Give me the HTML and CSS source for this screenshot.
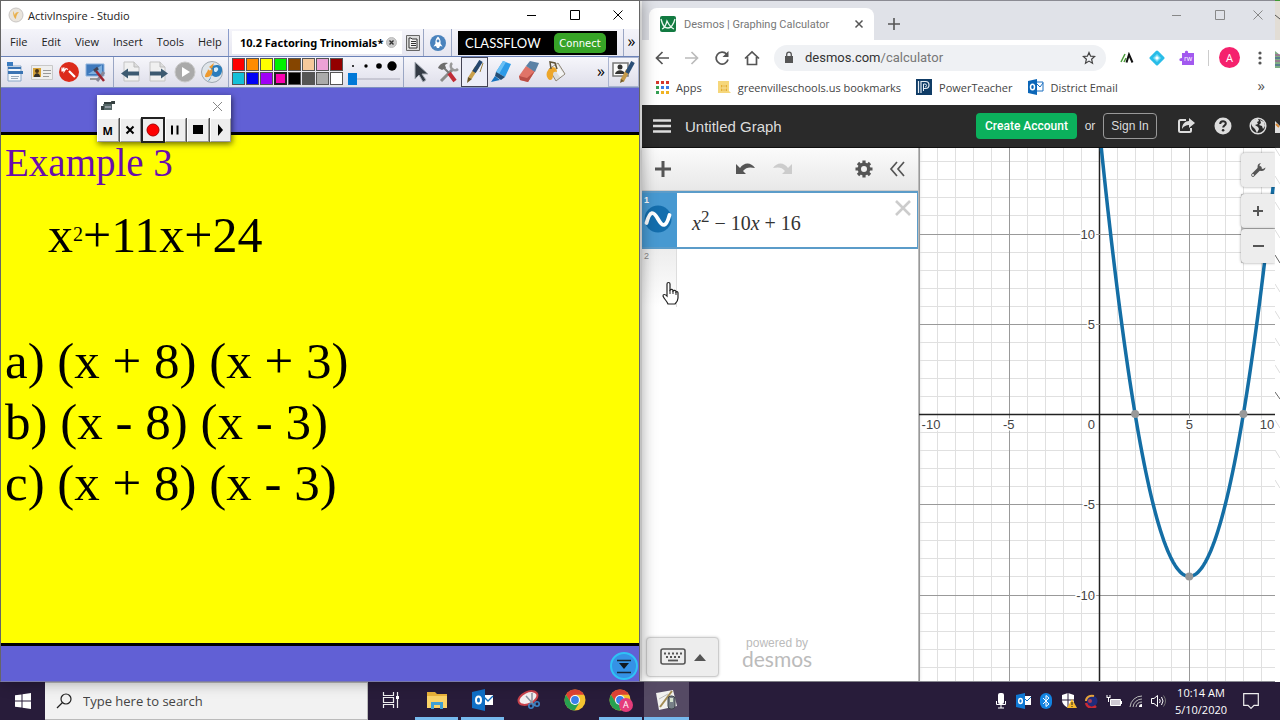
FILE: index.html
```html
<!DOCTYPE html>
<html lang="en">
<head>
    <meta charset="UTF-8">
    <meta name="viewport" content="width=device-width, initial-scale=1.0">
    <title>Factoring Trinomials</title>
    <link rel="stylesheet" href="styles.css">
</head>
<body>
    <main class="desktop">
        <!-- ActivInspire window -->
        <section class="inspire">
            <header class="title-bar">
                <svg class="app-logo" width="16" height="16" viewBox="0 0 16 16"><circle cx="8" cy="8" r="7" fill="#e9e4dc" stroke="#c9c6c4"/><path d="M5 4c0 4 1 7 3 8 0-3 1-5 3-7-3 0-4 1-4 3-1-1-1-3-2-4z" fill="#e9b04c"/></svg>
                <h1>ActivInspire - Studio</h1>
                <div class="window-controls">
                    <button aria-label="Minimize"><svg width="12" height="12" viewBox="0 0 12 12"><path d="M1 6.500h9" stroke="#000"/></svg></button>
                    <button aria-label="Maximize"><svg width="12" height="12" viewBox="0 0 12 12"><path d="M1.500 1.500h9v9h-9z" fill="none" stroke="#000"/></svg></button>
                    <button aria-label="Close"><svg width="12" height="12" viewBox="0 0 12 12"><path d="M1.500 1.500l9 9M10.500 1.500l-9 9" stroke="#000"/></svg></button>
                </div>
            </header>

            <div class="menu-row">
                <nav class="menu">
                    <button>File</button>
                    <button>Edit</button>
                    <button>View</button>
                    <button>Insert</button>
                    <button>Tools</button>
                    <button>Help</button>
                </nav>
                <div class="doc-tab">
                    <span>10.2 Factoring Trinomials*</span>
                    <button aria-label="Close tab"><svg width="11" height="11" viewBox="0 0 11 11"><circle cx="5.500" cy="5.500" r="5" fill="#ccc" stroke="#bbb"/><path d="M3.500 3.500l4 4M7.500 3.500l-4 4" stroke="#333" stroke-width="1.400"/></svg></button>
                </div>
                <button class="menu-icon" aria-label="Browsers"><svg width="14" height="16" viewBox="0 0 14 16"><path d="M.5.5h13v15H.5z" fill="#ddd" stroke="#666"/><path d="M3 3h2l1 1h5v9H3z" fill="#f4f4f4" stroke="#333"/><path d="M5 6.500h5M5 8.500h5M5 10.500h5" stroke="#333"/></svg></button>
                <button class="menu-icon lined" aria-label="Dashboard"><svg width="18" height="18" viewBox="0 0 18 18"><circle cx="9" cy="9" r="8" fill="#4a83bd"/><path d="M9 2.500c2 2 3 4 2.500 7l2 3-2.500-.5L10 14H8l-1-2-2.500.5 2-3C6 6.500 7 4.500 9 2.500z" fill="#fff"/><circle cx="9" cy="7" r="1.400" fill="#4a83bd"/></svg></button>
                <div class="classflow">
                    <span>CLASSFLOW</span>
                    <button>Connect</button>
                </div>
                <button class="more" aria-label="More">»</button>
            </div>

            <div class="tool-row">
                <div class="tools">
                    <button aria-label="Page browser"><svg width="20" height="22" viewBox="0 0 20 22"><path d="M3 5h13v15H3z" fill="#f3f7fb" stroke="#8aa7c8"/><path d="M2 1h6v4H2z" fill="#3b7cc0"/><path d="M3 6h13v2H3zM3 10h15v3H3z" fill="#3b74b3"/><path d="M6 15.500h8M6 17.500h7" stroke="#9ab"/></svg></button>
                    <button aria-label="Profiles"><svg width="22" height="20" viewBox="0 0 22 20"><path d="M.5 3.500h21v14H.5z" fill="#eee" stroke="#c8c8c8"/><path d="M2 6h8v9H2z" fill="#d7a43a"/><circle cx="6" cy="9" r="2" fill="#4a3418"/><path d="M3 15c0-5 6-5 6 0z" fill="#33302c"/><path d="M12 8.500h8M12 11.500h8M12 14.500h6" stroke="#999"/></svg></button>
                    <button aria-label="Annotate"><svg width="22" height="22" viewBox="0 0 22 22"><circle cx="11" cy="11" r="10" fill="#dc2b1b"/><path d="M11 10l6 6" stroke="#fff" stroke-width="2.200"/><path d="M4 6.500v4l2-4v4l2-3 2 1" stroke="#fff" stroke-width="1.200" fill="none"/></svg></button>
                    <button aria-label="Desktop tools"><svg width="22" height="22" viewBox="0 0 22 22"><path d="M1 3h18v12H1z" fill="#3f79bc" stroke="#8fb3dc"/><path d="M3 13L17 4v9z" fill="#7fb0df"/><path d="M5 18h9" stroke="#999" stroke-width="2"/><path d="M12 20l7-9" stroke="#889" stroke-width="3"/><path d="M11 10l8 10" stroke="#9d2631" stroke-width="2.500"/><path d="M9 10l4-3" stroke="#445" stroke-width="3"/></svg></button>
                </div>
                <div class="tools lined">
                    <button aria-label="Previous page"><svg width="22" height="22" viewBox="0 0 22 22"><path d="M4 1h10l5 5v14H4z" fill="#f0f0f0" stroke="#c4c4c4"/><path d="M14 1v5h5" fill="#ddd" stroke="#bbb"/><path d="M1 12.500l7-5v3h11v4H8v3z" fill="#3d5a70"/></svg></button>
                    <button aria-label="Next page"><svg width="22" height="22" viewBox="0 0 22 22"><path d="M3 1h10l5 5v14H3z" fill="#f0f0f0" stroke="#c4c4c4"/><path d="M13 1v5h5" fill="#ddd" stroke="#bbb"/><path d="M21 12.500l-7-5v3H3v4h11v3z" fill="#3d5a70"/></svg></button>
                    <button aria-label="Start vote"><svg width="22" height="22" viewBox="0 0 22 22"><circle cx="11" cy="11" r="10" fill="#aaa" stroke="#c8c8c8"/><path d="M8 6l8 5-8 5z" fill="#fff"/></svg></button>
                    <button aria-label="Express poll"><svg width="24" height="24" viewBox="0 0 24 24"><circle cx="12" cy="12" r="10.500" fill="#dfe5ea" stroke="#9fa8b0"/><path d="M8 21c4-5 5-9 2-14 7-4 13-2 12 4s-6 7-9 5-1 4-5 5z" fill="#2a7dbc"/><path d="M5 17c5 1 9-3 7-9-1 3-3 3-4 1 0 3-3 4-3 8zM9 7l5-4-2 6z" fill="#ee9a2f"/><path d="M14 8c3-2 5 0 4 2s-3 3-4 1z" fill="#d8eefa"/></svg></button>
                </div>
                <div class="palette">
                    <button class="swatch red" aria-label="Red"></button>
                    <button class="swatch orange" aria-label="Orange"></button>
                    <button class="swatch yellow" aria-label="Yellow"></button>
                    <button class="swatch green" aria-label="Green"></button>
                    <button class="swatch brown" aria-label="Brown"></button>
                    <button class="swatch peach" aria-label="Peach"></button>
                    <button class="swatch pink" aria-label="Pink"></button>
                    <button class="swatch maroon" aria-label="Maroon"></button>
                    <button class="swatch cyan" aria-label="Cyan"></button>
                    <button class="swatch blue" aria-label="Blue"></button>
                    <button class="swatch violet" aria-label="Violet"></button>
                    <button class="swatch magenta" aria-label="Magenta"></button>
                    <button class="swatch black" aria-label="Black"></button>
                    <button class="swatch gray" aria-label="Gray"></button>
                    <button class="swatch silver" aria-label="Silver"></button>
                    <button class="swatch white" aria-label="White"></button>
                </div>
                <div class="pen-width">
                    <svg width="52" height="12" viewBox="0 0 52 12"><circle cx="5" cy="6" r="1"/><circle cx="18" cy="6" r="1.700"/><circle cx="31" cy="6" r="2.800"/><circle cx="44" cy="6" r="4.700"/></svg>
                    <input type="range" min="0" max="100" value="0" aria-label="Pen width">
                </div>
                <div class="tools lined">
                    <button aria-label="Select"><svg width="20" height="24" viewBox="0 0 20 24"><path d="M4 2v17l4-4 4 7 3-2-4-6h6z" fill="#343b45" stroke="#a9afb8"/></svg></button>
                    <button aria-label="Main tools"><svg width="24" height="24" viewBox="0 0 24 24"><path d="M5 21L17 9" stroke="#8a8a8a" stroke-width="3"/><path d="M16 3a4 4 0 1 0 6 6" stroke="#999" stroke-width="2.500" fill="none"/><path d="M13 13l6 8" stroke="#c02b36" stroke-width="4"/><path d="M6 6l7 7" stroke="#777" stroke-width="2"/><path d="M2 8c2-5 6-6 10-5L9 5l1 3-4 2z" fill="#6d6d6d"/></svg></button>
                    <button class="selected" aria-label="Pen"><svg width="20" height="24" viewBox="0 0 20 24"><path d="M5 18L12 7" stroke="#caa14c" stroke-width="4"/><path d="M9 12L16 1" stroke="#24466d" stroke-width="4"/><path d="M2 23l1-6 4 2z" fill="#6a5524"/><path d="M18 3l-3 9" stroke="#9c8240"/></svg></button>
                    <button aria-label="Highlighter"><svg width="24" height="24" viewBox="0 0 24 24"><path d="M6 12L13 1l8 3-6 13z" fill="#2d9be8"/><path d="M13 1l3 1-7 12-3-2z" fill="#6bc0f5"/><path d="M6 12l9 5-4 3-6-4z" fill="#234d75"/><path d="M5 16l5 4-9 2z" fill="#1672bd"/></svg></button>
                    <button aria-label="Eraser"><svg width="24" height="24" viewBox="0 0 24 24"><path d="M2 16L9 6l9 5-7 11-8-2z" fill="#e07468"/><path d="M9 6l4-5 9 2-4 9z" fill="#5a81a5"/><path d="M2 16l8 2 8-7-7 11-8-2z" fill="#b94e46"/></svg></button>
                    <button aria-label="Fill"><svg width="24" height="24" viewBox="0 0 24 24"><path d="M5 9l9-6 7 11-9 7z" fill="#ddd" stroke="#8f8778"/><path d="M13 4l7 10-4 3L9 7z" fill="#f4f4f4"/><path d="M5 9c4-3 8-2 8 3-3-1-4 0-4 3s-1 5-3 5-6-6-1-11z" fill="#eda62a"/><path d="M7 9L6 2l5 1 2 6" stroke="#5e5238" fill="none" stroke-width="1.500"/></svg></button>
                </div>
                <button class="more" aria-label="More tools">»</button>
                <button class="profile" aria-label="Annotate over desktop"><svg width="24" height="24" viewBox="0 0 24 24"><path d="M1 3h15v13H1z" fill="#fafafa" stroke="#777" stroke-width="1.500"/><circle cx="8" cy="7" r="2.500" fill="#333"/><path d="M3 14c1-5 9-5 10 0z" fill="#333"/><path d="M10 21l6-11" stroke="#c59a4a" stroke-width="4"/><path d="M15 13l6-11" stroke="#2b4f78" stroke-width="4"/><path d="M8 23l1-4 3 2z" fill="#735c2a"/></svg></button>
            </div>

            <div class="flipchart">
                <div class="slide">
                    <h2>Example 3</h2>
                    <p class="expression">x<span>2</span>+11x+24</p>
                    <ol>
                        <li>a) (x + 8) (x + 3)</li>
                        <li>b) (x - 8) (x - 3)</li>
                        <li>c) (x + 8) (x - 3)</li>
                    </ol>
                </div>
                <button class="page-down" aria-label="Drop toolbar"><svg width="30" height="30" viewBox="0 0 30 30"><circle cx="15" cy="15" r="13" fill="#3592e6" stroke="#2fc2f5" stroke-width="2"/><path d="M8 9.500h14M8 21.500h14" stroke="#17283a" stroke-width="1.500"/><path d="M10 12h10l-5 6z" fill="#101820"/></svg></button>
            </div>

            <!-- Screen recorder -->
            <aside class="recorder">
                <div class="recorder-title">
                    <svg width="16" height="11" viewBox="0 0 16 11"><path d="M3 3h9v6H4z" fill="#566"/><path d="M4 1h8v2H4zM11 0h4v3h-3zM1 5h3v4H1z" fill="#354040"/><path d="M5 6h6" stroke="#ccd"/></svg>
                    <button aria-label="Close recorder"><svg width="11" height="11" viewBox="0 0 11 11"><path d="M1 1l9 9M10 1l-9 9" stroke="#888"/></svg></button>
                </div>
                <div class="recorder-buttons">
                    <button>M</button>
                    <button aria-label="Cancel"><svg width="12" height="12" viewBox="0 0 12 12"><path d="M2.500 2.500l7 7M9.500 2.500l-7 7" stroke="#000" stroke-width="2"/></svg></button>
                    <button class="active" aria-label="Record"><svg width="14" height="14" viewBox="0 0 14 14"><circle cx="7" cy="7" r="6" fill="#fe0000" stroke="#a00"/></svg></button>
                    <button aria-label="Pause"><svg width="12" height="12" viewBox="0 0 12 12"><path d="M3 1.500v9M8.500 1.500v9" stroke="#000" stroke-width="2"/></svg></button>
                    <button aria-label="Stop"><svg width="12" height="12" viewBox="0 0 12 12"><path d="M1 1h10v9H1z"/></svg></button>
                    <button aria-label="Play"><svg width="12" height="12" viewBox="0 0 12 12"><path d="M4 0l5 6-5 6z"/></svg></button>
                </div>
            </aside>
        </section>

        <!-- Chrome window -->
        <section class="chrome">
            <div class="tab-strip">
                <div class="tab">
                    <svg width="16" height="16" viewBox="0 0 16 16"><rect width="16" height="16" rx="2" fill="#127a41"/><path d="M1 3c2 8 4 9 7 9s5-2 7-9M2 13c3-1 4-4 5-8 2 4 4 7 7 8" stroke="#eaf7ee" stroke-width="1.300" fill="none"/></svg>
                    <span>Desmos | Graphing Calculator</span>
                    <button aria-label="Close tab"><svg width="10" height="10" viewBox="0 0 10 10"><path d="M1.500 1.500l7 7M8.500 1.500l-7 7" stroke="#555" stroke-width="1.500"/></svg></button>
                </div>
                <button class="new-tab" aria-label="New tab"><svg width="12" height="12" viewBox="0 0 12 12"><path d="M6 0v12M0 6h12" stroke="#555" stroke-width="1.600"/></svg></button>
                <div class="window-controls">
                    <button aria-label="Minimize"><svg width="12" height="12" viewBox="0 0 12 12"><path d="M1 6.500h9" stroke="#888"/></svg></button>
                    <button aria-label="Maximize"><svg width="12" height="12" viewBox="0 0 12 12"><path d="M1.500 1.500h9v9h-9z" fill="none" stroke="#888"/></svg></button>
                    <button aria-label="Close"><svg width="12" height="12" viewBox="0 0 12 12"><path d="M1.500 1.500l9 9M10.500 1.500l-9 9" stroke="#888"/></svg></button>
                </div>
            </div>

            <div class="address-row">
                <button aria-label="Back"><svg width="16" height="16" viewBox="0 0 16 16"><path d="M8.500 2L2.500 8l6 6M2.500 8H15" fill="none" stroke="#555" stroke-width="1.700"/></svg></button>
                <button aria-label="Forward"><svg width="16" height="16" viewBox="0 0 16 16"><path d="M7.500 2l6 6-6 6M13.500 8H1" fill="none" stroke="#bbb" stroke-width="1.700"/></svg></button>
                <button aria-label="Reload"><svg width="16" height="16" viewBox="0 0 16 16"><path d="M12.700 4.200A6 6 0 1 0 14 9.500" fill="none" stroke="#555" stroke-width="1.700"/><path d="M14.500 1v6h-6z" fill="#555"/></svg></button>
                <button aria-label="Home"><svg width="16" height="16" viewBox="0 0 16 16"><path d="M1 8.500L8 2l7 6.500M3.500 7v7.500h9V7" fill="none" stroke="#555" stroke-width="1.700"/></svg></button>
                <div class="address">
                    <svg width="10" height="14" viewBox="0 0 10 14"><path d="M1 5h8v7H1z" fill="#555"/><path d="M2.700 5V3.500a2.300 2.300 0 0 1 4.600 0V5" fill="none" stroke="#555" stroke-width="1.300"/></svg>
                    <span class="url">desmos.com<i>/calculator</i></span>
                    <button aria-label="Bookmark"><svg width="14" height="14" viewBox="0 0 14 14"><path d="M7 1.500l1.600 3.700 4 .3-3 2.700.9 4L7 10.100l-3.500 2.100.9-4-3-2.700 4-.3z" fill="none" stroke="#444" stroke-width="1.200"/></svg></button>
                </div>
                <button aria-label="Accessibility extension"><svg width="14" height="12" viewBox="0 0 14 12"><path d="M1 10L5 2M4 10l2-4" stroke="#4b9c3a" stroke-width="1.500"/><path d="M6.500 10.500L9 2.500l3.500 8" stroke="#111" stroke-width="2" fill="none"/></svg></button>
                <button aria-label="Blue extension"><svg width="16" height="16" viewBox="0 0 16 16"><path d="M8 2l6 6-6 6-6-6z" fill="#29bde8" stroke="#29bde8" stroke-linejoin="round" stroke-width="3"/><path d="M8 4l4 4-4 4-4-4z" fill="#7cdcf5"/><path d="M8 6l2 2-2 2-2-2z" fill="#fff"/></svg></button>
                <button aria-label="Read and write extension"><svg width="16" height="16" viewBox="0 0 16 16"><path d="M3 3h3c-1-3 4-3 3 0h6v12H3v-4c-3 1-4-3 0-3z" fill="#a259ef"/><text x="5" y="11" class="rw">rw</text></svg></button>
                <span class="divider"></span>
                <button class="avatar">A</button>
                <button aria-label="Menu"><svg width="4" height="14" viewBox="0 0 4 14"><g fill="#555"><circle cx="2" cy="2" r="1.600"/><circle cx="2" cy="7" r="1.600"/><circle cx="2" cy="12" r="1.600"/></g></svg></button>
            </div>

            <nav class="bookmarks">
                <a href="#"><svg width="14" height="14" viewBox="0 0 14 14"><path d="M1 1h3v3H1zM6 1h3v3H6zM11 1h3v3h-3z" fill="#d5372c"/><path d="M1 6h3v3H1zM1 11h3v3H1z" fill="#35a053"/><path d="M6 6h3v3H6zM11 6h3v3h-3z" fill="#3c7de6"/><path d="M6 11h3v3H6zM11 11h3v3h-3z" fill="#f0b323"/></svg>Apps</a>
                <a href="#"><svg width="14" height="14" viewBox="0 0 14 14"><path d="M1 1h11v10l2 2H1z" fill="#f6d77b"/><path d="M4 5h6v6H4z" fill="#e4ae35"/><path d="M6 5v6M8 5v6M4 8h6" stroke="#f9e29b"/></svg>greenvilleschools.us bookmarks</a>
                <a href="#"><svg width="16" height="16" viewBox="0 0 16 16"><path d="M0 0h16v16H0z" fill="#103c66"/><path d="M2.500 2v12M5 14V2.500h4.500a3.500 3.500 0 0 1 0 7H7.500" stroke="#e8eef5" stroke-width="1.200" fill="none"/><path d="M7.500 12V5H9a1.500 1.500 0 0 1 0 3" stroke="#e8eef5" fill="none"/></svg>PowerTeacher</a>
                <a href="#"><svg width="16" height="16" viewBox="0 0 16 16"><path d="M8 3h7v9H8z" fill="#fff" stroke="#1b6fc0"/><path d="M9 5l3 3 3-4" stroke="#1b6fc0" fill="none"/><path d="M0 2l9-2v16l-9-2z" fill="#0b66b8"/><ellipse cx="4.500" cy="8" rx="2" ry="2.800" fill="none" stroke="#fff" stroke-width="1.500"/></svg>District Email</a>
                <button aria-label="More bookmarks">»</button>
            </nav>

            <header class="desmos-header">
                <button aria-label="Open menu"><svg width="18" height="16" viewBox="0 0 18 16"><path d="M0 2.500h18M0 8h18M0 13.500h18" stroke="#ddd" stroke-width="2.600"/></svg></button>
                <h2>Untitled Graph</h2>
                <button class="create">Create Account</button>
                <span>or</span>
                <button class="sign-in">Sign In</button>
                <button class="round" aria-label="Share"><svg width="18" height="18" viewBox="0 0 18 18"><path d="M9 3H3.500Q2 3 2 4.500v9Q2 15 3.500 15h9q1.500 0 1.500-1.500V11" fill="none" stroke="#ddd" stroke-width="2"/><path d="M12 1l6 5-6 5V8c-3 0-5 1-7 4 0-5 3-8 7-8z" fill="#ddd"/></svg></button>
                <button class="round" aria-label="Help"><svg width="18" height="18" viewBox="0 0 18 18"><circle cx="9" cy="9" r="8.500" fill="#ddd"/><path d="M6.200 7c0-4 5.600-3.500 5.600-.5 0 2-2.600 2-2.600 4" fill="none" stroke="#2a2a2a" stroke-width="2"/><circle cx="9.100" cy="13.300" r="1.300" fill="#2a2a2a"/></svg></button>
                <button class="round" aria-label="Language"><svg width="18" height="18" viewBox="0 0 18 18"><circle cx="9" cy="9" r="7.800" fill="none" stroke="#ddd" stroke-width="1.500"/><path d="M2 6c2-4 5-4 7-4l1 2-2 1 1 2-3 1 3 2 1 2-2 4-2-4-3-3zM11 3l4 2 1 4-2 3-1-3-3-1 2-2z" fill="#ddd"/></svg></button>
            </header>

            <div class="calculator">
                <div class="panel">
                    <div class="panel-bar">
                        <button aria-label="Add item"><svg width="16" height="16" viewBox="0 0 16 16"><path d="M8 0v16M0 8h16" stroke="#555" stroke-width="3"/></svg></button>
                        <button class="undo" aria-label="Undo"><svg width="20" height="14" viewBox="0 0 20 14"><path d="M0 2v10h10L7 9c3-4 7-4 12-3C15 0 8 0 4 6z" fill="#555"/></svg></button>
                        <button aria-label="Redo"><svg width="20" height="14" viewBox="0 0 20 14"><path d="M20 2v10H10l3-3C10 5 6 5 1 6 5 0 12 0 16 6z" fill="#ccc"/></svg></button>
                        <button class="gear" aria-label="Edit list"><svg width="18" height="18" viewBox="0 0 18 18"><circle cx="9" cy="9" r="4.700" fill="none" stroke="#555" stroke-width="3.400"/><path d="M9 .5v3M9 14.500v3M.5 9h3M14.500 9h3M3 3l2.500 2.500M12.500 12.500L15 15M15 3l-2.500 2.500M5.500 12.500L3 15" stroke="#555" stroke-width="3.200"/></svg></button>
                        <button aria-label="Hide list"><svg width="16" height="16" viewBox="0 0 16 16"><path d="M8 1L2 8l6 7M15 1L9 8l6 7" fill="none" stroke="#555" stroke-width="1.700"/></svg></button>
                    </div>
                    <div class="row active">
                        <div class="row-index">
                            <span>1</span>
                            <svg width="28" height="28" viewBox="0 0 28 28"><circle cx="14" cy="14" r="13.500" fill="#146ead"/><path d="M2.500 18C6 5 9.500 6 14 14s8 9 11.500-4" fill="none" stroke="#fff" stroke-width="3.800" stroke-linecap="round"/></svg>
                        </div>
                        <div class="math"><i>x</i><sup>2</sup><b>−</b>10<i>x</i><b>+</b>16</div>
                        <button aria-label="Delete"><svg width="16" height="16" viewBox="0 0 16 16"><path d="M1 1l14 14M15 1L1 15" stroke="#ccc" stroke-width="2.600"/></svg></button>
                    </div>
                    <div class="row">
                        <div class="row-index"><span>2</span></div>
                        <svg class="pointer" width="18" height="24" viewBox="0 0 18 24"><path d="M6 14V3c0-2 3-2 3 0v6c1-1 3-1 3 1 1-1 3-1 3 1 1-1 2 0 2 1v5c0 3-2 5-3 6H7c-1-3-4-5-5-8 0-2 2-2 4 0z" fill="#fff" stroke="#222" stroke-width="1.200"/><path d="M9 9v4M12 10v3M15 11v3" stroke="#222"/></svg>
                    </div>
                    <div class="panel-footer">
                        <button class="keypad" aria-label="Show keypad">
                            <svg width="26" height="18" viewBox="0 0 26 18"><rect x="1" y="1" width="24" height="15" rx="2" fill="none" stroke="#555" stroke-width="1.600"/><path d="M4 5.500h18M6 9h15" stroke="#555" stroke-width="2" stroke-dasharray="2 2"/><path d="M8 12.500h10" stroke="#555" stroke-width="1.800"/></svg>
                            <svg width="12" height="7" viewBox="0 0 12 7"><path d="M6 0l6 7H0z" fill="#555"/></svg>
                        </button>
                        <p class="powered">powered by<strong>desmos</strong></p>
                    </div>
                </div>
                <div class="graph">
                    <svg id="plot"></svg>
                    <div class="graph-tools">
                        <button aria-label="Graph settings"><svg width="16" height="16" viewBox="0 0 16 16"><path d="M3 13l7-7" stroke="#555" stroke-width="3.600" stroke-linecap="round"/><path d="M11 1a4 4 0 1 0 4.500 4.500L13 7l-3-1-.5-3z" fill="#555"/><circle cx="3" cy="13" r="1" fill="#eee"/></svg></button>
                        <div class="zoom">
                            <button aria-label="Zoom in"><svg width="12" height="12" viewBox="0 0 12 12"><path d="M6 1v10M1 6h10" stroke="#555" stroke-width="2"/></svg></button>
                            <button aria-label="Zoom out"><svg width="12" height="12" viewBox="0 0 12 12"><path d="M1 6h11" stroke="#555" stroke-width="2"/></svg></button>
                        </div>
                    </div>
                </div>
            </div>
        </section>

        <!-- Strip of the desktop wallpaper -->
        <svg class="wallpaper" width="5" height="682" viewBox="0 0 5 682" preserveAspectRatio="none">
            <path d="M0 0h5v40H0z" fill="#e2ddd5"/>
            <path d="M0 0h5v1H0z" fill="#3f9b35"/>
            <path d="M0 15l5 4" stroke="#555"/>
            <path d="M0 51l5 4v13H0z" fill="#7fae84"/>
            <path d="M0 55h5M0 61h5" stroke="#b04a9b"/><path d="M0 58h5M0 65h5" stroke="#364f9b"/>
            <path d="M0 105h5v43H0z" fill="#2a2a2a"/>
            <path d="M0 121l5 5v7H0z" fill="#ddd"/><path d="M1 124l3 3" stroke="#d98a36" stroke-width="2"/>
            <path d="M0 255l5 8M0 392l5 7" stroke="#666"/>
            <path d="M0 148l5 8M0 176l5 8M0 202l5 8M0 230l5 8M0 284l5 8M0 311l5 8M0 338l5 8M0 365l5 8M0 420l5 8M0 450l5 8M0 480l5 8" stroke="#ddd"/>
        </svg>
    </main>

    <footer class="taskbar">
        <button class="start" aria-label="Start"><svg width="16" height="16" viewBox="0 0 16 16"><path d="M0 2.300L6.500 1.400v6.100H0zM7.500 1.200L16 0v7.500H7.500zM0 8.500h6.500v6.100L0 13.700zM7.500 8.500H16V16l-8.500-1.200z" fill="#fff"/></svg></button>
        <label class="search">
            <svg width="16" height="16" viewBox="0 0 16 16"><circle cx="10" cy="6" r="5" fill="none" stroke="#222" stroke-width="1.200"/><path d="M6.500 9.500L1 15" stroke="#222" stroke-width="1.200"/></svg>
            <input type="text" placeholder="Type here to search" aria-label="Type here to search">
        </label>
        <nav class="apps">
            <button aria-label="Task view"><svg width="18" height="16" viewBox="0 0 18 16"><path d="M1.500 0v3.500h10V0M1.500 16v-3.500h10V16M1.500 5.500h10v5h-10zM15.500 0v16" fill="none" stroke="#eee" stroke-width="1.200"/><path d="M14 4h3v3h-3z" fill="#fff"/></svg></button>
            <button class="open" aria-label="File Explorer"><svg width="22" height="20" viewBox="0 0 22 20"><path d="M1 2h8l2 2h10v14H1z" fill="#e9b23a"/><path d="M1 6h20v12H1z" fill="#fbd368"/><path d="M5 19v-7h12v7h-3v-4H8v4z" fill="#3f9fd4"/></svg></button>
            <button class="open" aria-label="Outlook"><svg width="22" height="22" viewBox="0 0 22 22"><path d="M11 6h10v10H11z" fill="#fff"/><path d="M12 8l4 4 5-5" stroke="#0f6cbd" stroke-width="1.300" fill="none"/><path d="M0 3l13-3v22L0 19z" fill="#0f6fc6"/><ellipse cx="6.500" cy="11" rx="2.500" ry="3.500" fill="none" stroke="#fff" stroke-width="2"/></svg></button>
            <button aria-label="Snipping Tool"><svg width="24" height="22" viewBox="0 0 24 22"><ellipse cx="11" cy="9" rx="10" ry="6" fill="#f3eff0" stroke="#c8414a" stroke-width="2" transform="rotate(-25 11 9)"/><path d="M9 7l9 10M15 4v11" stroke="#8a94a0" stroke-width="1.500"/><circle cx="14" cy="17" r="2.200" fill="none" stroke="#3b82c4" stroke-width="1.600"/><circle cx="20" cy="15" r="2.200" fill="none" stroke="#3b82c4" stroke-width="1.600"/></svg></button>
            <button aria-label="Chrome"><svg width="22" height="22" viewBox="0 0 22 22"><circle cx="11" cy="11" r="10.500" fill="#f4c430"/><path d="M1.900 5.800A10.500 10.500 0 0 1 20.100 5.800H11L6.500 13.600z" fill="#e04434"/><path d="M1.900 5.800A10.500 10.500 0 0 0 10.500 21.500l5-8-9-.5z" fill="#28a150"/><circle cx="11" cy="11" r="5" fill="#fff"/><circle cx="11" cy="11" r="3.900" fill="#3b80ea"/></svg></button>
            <button class="open" aria-label="Chrome, profile A"><svg width="24" height="24" viewBox="0 0 24 24"><circle cx="11" cy="12" r="10.500" fill="#f4c430"/><path d="M1.900 6.800A10.500 10.500 0 0 1 20.100 6.800H11L6.500 14.600z" fill="#e04434"/><path d="M1.900 6.800A10.500 10.500 0 0 0 10.500 22.500l5-8-9-.5z" fill="#28a150"/><circle cx="11" cy="12" r="5" fill="#fff"/><circle cx="11" cy="12" r="3.900" fill="#3b80ea"/><circle cx="17" cy="17" r="7" fill="#e53c7b"/><text x="14" y="20" class="badge">A</text></svg></button>
            <button class="open current" aria-label="ActivInspire"><svg width="24" height="22" viewBox="0 0 24 22"><path d="M1 4l17-3 4 16-18 4z" fill="#f2f2ef"/><path d="M5 18L17 2" stroke="#a38c54" stroke-width="2"/><path d="M4 10l9-5" stroke="#bbb"/><rect x="13" y="7" width="7" height="13" rx="3" fill="#778087" stroke="#3f454b"/><path d="M15 9h3v4h-3z" fill="#d6e3cf"/></svg></button>
        </nav>
        <div class="tray">
            <button aria-label="Microphone"><svg width="12" height="16" viewBox="0 0 12 16"><rect x="3" width="6" height="11" rx="2" fill="#fff"/><path d="M1.500 8v3.500h9V8M6 11v4M3 15h6" stroke="#fff" fill="none"/></svg></button>
            <button aria-label="Outlook"><svg width="16" height="16" viewBox="0 0 16 16"><path d="M7 3h8v9H7z" fill="#fff"/><path d="M9 6l2 2 4-4" stroke="#0f6cbd" fill="none"/><path d="M0 2l9-2v16l-9-2z" fill="#0f78d4"/><ellipse cx="4.500" cy="8" rx="1.800" ry="2.500" fill="none" stroke="#fff" stroke-width="1.400"/></svg></button>
            <button aria-label="Bluetooth"><svg width="12" height="16" viewBox="0 0 12 16"><rect width="12" height="16" rx="6" fill="#1283e2"/><path d="M3 5l6 6-3 2.500v-11L9 5l-6 6" fill="none" stroke="#fff"/></svg></button>
            <button aria-label="Security"><svg width="16" height="16" viewBox="0 0 16 16"><path d="M7 0l6 2v5c0 4-3 6-6 8-3-2-6-4-6-8V2z" fill="#fff"/><path d="M7 0v15M1 7h12" stroke="#281c3a"/><path d="M11 6l5 9H6z" fill="#f5b72c"/><path d="M11 9v3M11 13v1" stroke="#222"/></svg></button>
            <button aria-label="Sync"><svg width="14" height="14" viewBox="0 0 14 14"><circle cx="8" cy="7" r="5.500" fill="#202c7c"/><path d="M2 9a6 6 0 0 0 10 3" stroke="#c92936" stroke-width="2.500" fill="none"/><path d="M2 7c0-4 4-6 8-5" stroke="#e6a23a" stroke-width="2" fill="none"/><circle cx="6" cy="7" r="2" fill="#a83b56"/></svg></button>
            <button aria-label="Battery"><svg width="16" height="14" viewBox="0 0 16 14"><path d="M4.500 5.500h10v6h-10z" fill="#cfcad4" stroke="#fff"/><path d="M15.500 7v3M1 1v2M4 1v2M.5 3.500h4M2.500 4v4" stroke="#fff"/></svg></button>
            <button aria-label="Network"><svg width="14" height="14" viewBox="0 0 14 14"><path d="M1 13A12 12 0 0 1 13 2M4 13a9 9 0 0 1 9-8M7 13a6 6 0 0 1 6-5" fill="none" stroke="#bbb"/><path d="M10 13a3 3 0 0 1 3-3v3z" fill="#fff"/></svg></button>
            <button aria-label="Volume"><svg width="16" height="14" viewBox="0 0 16 14"><path d="M.5 4.500H3l3.500-3v11L3 9.500H.5z" fill="none" stroke="#fff"/><path d="M8.500 5q1.500 2 0 4M10.500 3q3 4 0 8" stroke="#fff" fill="none"/><path d="M12.500 1.500q4 5.500 0 11" stroke="#777" fill="none"/></svg></button>
        </div>
        <time class="clock">10:14 AM<br>5/10/2020</time>
        <button class="notifications" aria-label="Notifications"><svg width="16" height="16" viewBox="0 0 16 16"><path d="M.7.700h14.600v11.600H11L8 15.300l-3-3H.7z" fill="none" stroke="#eee" stroke-width="1.200"/></svg></button>
    </footer>

    <script src="graph.js"></script>
</body>
</html>
```
FILE: styles.css
```css
* {
    box-sizing: border-box;
}

body {
    margin: 0;
    height: 100vh;
    display: flex;
    flex-direction: column;
    overflow: hidden;
    font-family: "Open Sans", "Noto Sans", sans-serif;
    font-size: 11px;
    color: #222;
}

button {
    display: flex;
    align-items: center;
    justify-content: center;
    padding: 0;
    border: none;
    background: none;
    font: inherit;
    color: inherit;
}

h1, h2, p, ol {
    margin: 0;
    padding: 0;
    font-weight: normal;
}

svg {
    flex: none;
}

.desktop {
    flex: 1;
    min-height: 0;
    display: grid;
    grid-template-columns: 50% 1fr 5px;
    background: #fff;
}

.wallpaper {
    height: 100%;
}

/* ActivInspire */
.inspire {
    position: relative;
    z-index: 1;
    display: flex;
    flex-direction: column;
    min-width: 0;
    border: 1px solid #666;
    border-bottom-color: #7a79a8;
    background: #fff;
    box-shadow: 2px 0 14px rgba(0, 0, 0, 0.35);
}

.title-bar {
    display: flex;
    align-items: center;
    height: 28px;
    padding-left: 7px;
    gap: 4px;
}

.title-bar h1 {
    font-size: 11px;
}

.window-controls {
    display: flex;
    margin-left: auto;
}

.window-controls button {
    width: 43px;
    height: 28px;
}

.menu-row {
    display: flex;
    align-items: stretch;
    height: 28px;
    background: linear-gradient(#f4f4fa, #e6e6f0);
    border-bottom: 1px solid #6b82b8;
}

.menu {
    display: flex;
    gap: 14px;
    width: 228px;
    padding: 0 0 3px 9px;
    border-right: 1px solid #8a9ccb;
}

.doc-tab {
    display: flex;
    align-items: center;
    justify-content: space-between;
    width: 170px;
    margin: 2px 1px 2px 3px;
    padding: 0 5px 0 8px;
    background: #fff;
    color: #000;
    font: bold 11px "Noto Sans", sans-serif;
    white-space: nowrap;
}

.menu-icon {
    width: 20px;
}

.lined {
    border-left: 1px solid #9aa6c4;
}

.menu-icon.lined {
    border-right: 1px solid #9aa6c4;
    width: 29px;
}

.classflow {
    display: flex;
    align-items: center;
    justify-content: space-between;
    width: 159px;
    margin: 2px 6px 1px;
    padding: 0 11px 0 7px;
    background: #000;
    color: #fff;
    font: 13px Lato, sans-serif;
}

.classflow button {
    width: 52px;
    height: 20px;
    border-radius: 5px;
    background: #37a427;
    font: 10px "DejaVu Sans", sans-serif;
}

.more {
    flex: 1;
    font-size: 16px;
    color: #000;
    padding-bottom: 3px;
}

.menu-row .more {
    border-left: 1px solid #9aa6c4;
}

.tool-row {
    display: flex;
    height: 31px;
    background: linear-gradient(#f6f6fb, #dedeea);
    border-bottom: 1px solid #7d8fc0;
}

.tool-row .more {
    justify-content: flex-end;
    padding-right: 3px;
}

.tools {
    display: flex;
}

.tools button {
    width: 27px;
}

.tools.lined {
    margin-left: 4px;
    padding-left: 3px;
}

.tools .selected {
    border: 1px solid #445;
    background: #eceef8;
}

.palette {
    display: grid;
    grid-template-columns: repeat(8, 13px);
    grid-auto-rows: 13px;
    gap: 1px;
    margin-left: 3px;
    padding: 1px 0 0 3px;
    border-left: 1px solid #9aa6c4;
}

.swatch {
    border: 1px solid #555;
}

.red { background: #fe0000; }
.orange { background: #ff8c00; }
.yellow { background: #ff0; }
.green { background: #00f300; }
.brown { background: #854500; }
.peach { background: #f5c99b; }
.pink { background: #eda2d6; }
.maroon { background: #930000; }
.cyan { background: #12c0d8; }
.blue { background: #0000f5; }
.violet { background: #a000f5; }
.magenta { background: #fb00b0; border: 2px solid #222; }
.black { background: #000; }
.gray { background: #555; }
.silver { background: #aaa; }
.white { background: #fff; }

.pen-width {
    display: flex;
    flex-direction: column;
    padding: 3px 0 0 5px;
    width: 56px;
}

.pen-width input {
    appearance: none;
    width: 52px;
    height: 13px;
    margin: 0;
    background: linear-gradient(#c8c8d4, #c8c8d4) center / 100% 2px no-repeat;
}

.pen-width input::-webkit-slider-thumb {
    appearance: none;
    width: 9px;
    height: 12px;
    background: #0078d7;
}

.profile {
    width: 31px;
    border: 1px solid #aab4d0;
}

.flipchart {
    position: relative;
    flex: 1;
    min-height: 0;
    display: flex;
    padding: 44px 0 35px;
    background: #6160d5;
}

.slide {
    flex: 1;
    padding: 6px 4px 0;
    border-top: 3px solid #000;
    border-bottom: 3px solid #000;
    background: #ff0;
    color: #000;
    font-family: "Liberation Serif", serif;
    font-size: 50px;
    line-height: 61px;
}

.slide h2 {
    color: #6a0dad;
    font-size: 39px;
    line-height: 44px;
}

.expression {
    margin: 20px 0 65px 43px;
}

.expression span {
    font-size: 20px;
    vertical-align: 11px;
    line-height: 20px;
}

.slide ol {
    list-style: none;
    font-size: 51px;
}

.page-down {
    position: absolute;
    right: 0;
    bottom: 0;
}

.recorder {
    position: absolute;
    left: 96px;
    top: 94px;
    width: 134px;
    background: #fff;
    box-shadow: 1px 2px 6px rgba(0, 0, 0, 0.6);
}

.recorder-title {
    display: flex;
    align-items: center;
    justify-content: space-between;
    height: 23px;
    padding: 0 8px 0 3px;
}

.recorder-buttons {
    display: grid;
    grid-template-columns: repeat(6, 1fr);
    background: #555;
    gap: 1px;
}

.recorder-buttons button {
    height: 24px;
    border: 1px solid #fff;
    border-right-color: #999;
    border-bottom-color: #999;
    background: #eee;
    color: #000;
    font-weight: bold;
}

.recorder-buttons .active {
    border: 1px solid #222;
    outline: 1px solid #222;
}

/* Chrome */
.chrome {
    display: flex;
    flex-direction: column;
    min-width: 0;
    padding-left: 2px;
    border-top: 1px solid #8b8b93;
    border-bottom: 1px solid #8b8b93;
    background: #fff;
    color: #555;
}

.tab-strip {
    display: flex;
    align-items: flex-start;
    height: 39px;
    padding-left: 7px;
    background: #e0e2e8;
}

.tab-strip .window-controls button:last-child {
    width: 34px;
}

.tab {
    display: flex;
    align-items: center;
    gap: 8px;
    width: 225px;
    height: 32px;
    margin-top: 7px;
    padding: 0 10px 0 11px;
    border-radius: 8px 8px 0 0;
    background: #fff;
    color: #777;
    font-family: Roboto, sans-serif;
}

.tab button {
    margin-left: auto;
}

.new-tab {
    width: 40px;
    height: 46px;
}

.address-row {
    display: flex;
    align-items: center;
    height: 35px;
    padding-left: 5px;
}

.address-row > button {
    width: 30px;
}

.address {
    flex: 1;
    display: flex;
    align-items: center;
    gap: 11px;
    height: 26px;
    margin: 0 6px 0 7px;
    padding: 0 10px;
    border-radius: 13px;
    background: #eff1f4;
    color: #333;
    font: 13px Roboto, sans-serif;
}

.url i {
    font-style: normal;
    color: #777;
}

.address button {
    margin-left: auto;
}

.rw {
    fill: #fff;
    font-size: 7px;
}

.divider {
    width: 1px;
    height: 16px;
    margin: 0 10px 0 6px;
    background: #ccc;
}

.address-row > .avatar {
    width: 21px;
    height: 21px;
    margin-right: 5px;
    border-radius: 50%;
    background: #f5226d;
    color: #fff;
}

.bookmarks {
    display: flex;
    align-items: center;
    gap: 15px;
    height: 30px;
    padding: 0 10px 6px 13px;
}

.bookmarks a {
    display: flex;
    align-items: center;
    gap: 7px;
    color: #444;
    text-decoration: none;
    white-space: nowrap;
}

.bookmarks button {
    margin-left: auto;
    padding-bottom: 4px;
    font-size: 15px;
}

.desmos-header {
    display: flex;
    align-items: center;
    height: 43px;
    padding-left: 11px;
    background: #2a2a2a;
    border-bottom: 1px solid #111;
    color: #ddd;
    font-family: "Liberation Sans", Arial, sans-serif;
    font-size: 12px;
}

.desmos-header h2 {
    margin: 0 auto 0 14px;
    font-size: 15px;
}

.create {
    width: 101px;
    height: 26px;
    border-radius: 4px;
    background: #0bb05c;
    color: #fff;
    font-family: Roboto, sans-serif;
    font-weight: 500;
}

.desmos-header span {
    width: 26px;
    text-align: center;
}

.sign-in {
    width: 54px;
    height: 26px;
    margin-right: 10px;
    border: 1px solid #999;
    border-radius: 4px;
}

.round {
    width: 37px;
}

.round:last-child {
    width: 34px;
}

.calculator {
    flex: 1;
    min-height: 0;
    display: flex;
}

.panel {
    display: flex;
    flex-direction: column;
    width: 277px;
    border-right: 1px solid #bbb;
    box-shadow: 0 0 4px rgba(0, 0, 0, 0.2);
}

.panel-bar {
    display: flex;
    align-items: center;
    height: 43px;
    padding: 0 13px;
    gap: 16px;
    background: linear-gradient(#fbfbfb, #e8e8e8);
    border-bottom: 1px solid #ccc;
}

.panel-bar .undo {
    margin-left: 49px;
}

.panel-bar .gear {
    margin-left: auto;
}

.row {
    position: relative;
    display: flex;
    height: 58px;
}

.row.active {
    border: 2px solid #5b9cc9;
    border-left: none;
    border-right-width: 1px;
}

.row-index {
    width: 35px;
    background: linear-gradient(#ededed, #fff);
    border-right: 1px solid #ddd;
    color: #888;
    padding: 2px;
    font: 9px "Liberation Sans", sans-serif;
}

.row-index span {
    display: block;
}

.active .row-index {
    background: #4799d1;
    border: none;
    color: #fff;
    font-weight: bold;
}

.math {
    flex: 1;
    display: flex;
    align-items: baseline;
    padding: 18px 0 0 15px;
    color: #333;
    font: 20px "Liberation Serif", serif;
    line-height: 24px;
}

.math sup {
    align-self: flex-start;
    font-size: 17px;
    line-height: 12px;
}

.math b {
    margin: 0 5px;
    font-weight: normal;
}

.row button {
    align-self: flex-start;
    margin: 7px 6px;
}

.pointer {
    position: absolute;
    left: 19px;
    top: 32px;
}

.panel-footer {
    display: flex;
    align-items: flex-end;
    gap: 23px;
    margin-top: auto;
    padding: 0 4px 4px;
}

.keypad {
    gap: 8px;
    width: 73px;
    height: 40px;
    border: 1px solid #ccc;
    border-radius: 4px;
    background: #ededed;
    box-shadow: 0 0 3px rgba(0, 0, 0, 0.2);
}

.powered {
    padding-bottom: 9px;
    color: #bbb;
    font: 12px/14px "Liberation Sans", sans-serif;
    text-align: center;
}

.powered strong {
    display: block;
    font: 21px/18px Lato, sans-serif;
}

.graph {
    position: relative;
    flex: 1;
    min-width: 0;
    overflow: hidden;
}

#plot {
    display: block;
    width: 100%;
    height: 100%;
}

#plot text {
    font: 13px "Liberation Sans", sans-serif;
    fill: #444;
    stroke: #fff;
    stroke-width: 3px;
    paint-order: stroke;
}

.graph-tools {
    position: absolute;
    top: 5px;
    right: 0;
}

.graph-tools button {
    width: 34px;
    height: 34px;
    background: #ededed;
    border-radius: 4px 0 0 4px;
    box-shadow: 0 0 3px rgba(0, 0, 0, 0.4);
}

.zoom {
    margin-top: 7px;
    background: #ccc;
}

.zoom button + button {
    margin-top: 1px;
}

/* Taskbar */
.taskbar {
    display: flex;
    height: 38px;
    background: #281c3a;
    color: #fff;
}

.start {
    width: 45px;
}

.search {
    display: flex;
    align-items: center;
    gap: 11px;
    width: 323px;
    padding-left: 11px;
    background: #f2f2f2;
    border: 1px solid #bbb;
    border-left: none;
}

.search input {
    flex: 1;
    border: none;
    background: none;
    padding: 0;
    font: 13px "Open Sans", sans-serif;
}

.search input::placeholder {
    color: #444;
}

.apps {
    display: flex;
    gap: 1px;
}

.apps button {
    width: 45px;
    border-bottom: 3px solid transparent;
}

.apps .open {
    border-image: linear-gradient(90deg, transparent 4px, #76b9ed 4px, #76b9ed 41px, transparent 41px) 3;
}

.apps .current {
    background: #554a64;
    border-image: none;
    border-bottom-color: #76b9ed;
}

.badge {
    fill: #fff;
    font-size: 9px;
}

.tray {
    display: grid;
    grid-template-columns: repeat(8, 1fr);
    width: 180px;
    margin-left: auto;
}

.clock {
    width: 62px;
    align-self: center;
    text-align: center;
    line-height: 17px;
}

.notifications {
    width: 37px;
    margin-right: 11px;
}
```
FILE: graph.js
```js
const UNIT = 18.05; // pixels per graph unit
const NS = 'http://www.w3.org/2000/svg';
const plot = document.getElementById('plot');

function add(name, attrs, text) {
    const el = document.createElementNS(NS, name);
    for (const key in attrs) el.setAttribute(key, attrs[key]);
    if (text !== undefined) el.textContent = text;
    plot.appendChild(el);
}

function lineColor(n) {
    if (n === 0) return '#222';
    return n % 5 === 0 ? '#999' : '#e0e0e0';
}

function f(x) {
    return x * x - 10 * x + 16;
}

function drawGraph() {
    plot.innerHTML = '';
    const w = plot.clientWidth;
    const h = plot.clientHeight;
    const ox = Math.round(w / 2) + 2;
    const oy = Math.round(h / 2) - 1;

    // Grid: minor lines first, so that the major ones stay on top
    for (const major of [false, true]) {
        for (let n = -40; n <= 40; n++) {
            if ((n % 5 === 0) !== major) continue;
            const x = Math.round(ox + n * UNIT) + 0.5;
            const y = Math.round(oy - n * UNIT) + 0.5;
            const width = n === 0 ? 1.5 : 1;
            add('path', { d: `M${x} 0V${h}M0 ${y}H${w}`, stroke: lineColor(n), 'stroke-width': width });
        }
    }

    // Axis labels, kept inside the plot at both ends of the x axis
    for (const n of [-10, -5, 5, 10]) {
        const x = Math.max(12, Math.min(w - 8, ox + n * UNIT));
        add('text', { x, y: oy + 15, 'text-anchor': 'middle' }, n);
        add('text', { x: ox - 4, y: oy - n * UNIT + 5, 'text-anchor': 'end' }, n);
    }
    add('text', { x: ox - 4, y: oy + 15, 'text-anchor': 'end' }, 0);

    // Curve
    let d = '';
    for (let x = -1; x <= 11; x += 0.1) {
        d += (d ? 'L' : 'M') + (ox + x * UNIT) + ' ' + (oy - f(x) * UNIT);
    }
    add('path', { d, fill: 'none', stroke: '#146ea5', 'stroke-width': 3.5 });

    // Roots and vertex
    for (const x of [2, 5, 8]) {
        add('circle', { cx: ox + x * UNIT, cy: oy - f(x) * UNIT, r: 4, fill: '#999' });
    }
}

drawGraph();
window.addEventListener('resize', drawGraph);
```
